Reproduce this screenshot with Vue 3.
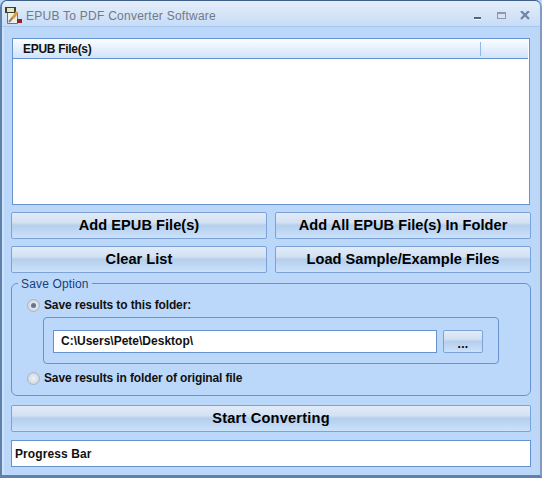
<template>
  <div class="window">
    <header class="titlebar">
      <svg class="appicon" width="18" height="17" viewBox="0 0 18 17">
        <path d="M2.5 5.5h10v11h-10z" fill="#f2efe8" stroke="#77726a" />
        <rect x="0" y="0" width="11" height="6" fill="#39422a" />
        <rect x="2" y="1" width="7" height="4" fill="#e6e6c4" />
        <path d="M4 15l5-6" stroke="#8a8478" stroke-width="2" />
        <path d="M8 11l4-6" stroke="#e09a30" stroke-width="3" />
        <rect x="12" y="12" width="5" height="4" fill="#9c2226" />
      </svg>
      <span class="title">EPUB To PDF Converter Software</span>
      <div class="controls">
        <svg width="57" height="14" viewBox="0 0 57 14">
          <rect x="0" y="6" width="7" height="2" fill="#5a6478" />
          <rect x="0" y="8" width="7" height="1" fill="#f4f8ff" />
          <rect x="23.5" y="1.5" width="8" height="6" fill="#d8e2f0" stroke="#8e98a8" />
          <rect x="23" y="1" width="9" height="2" fill="#8e98a8" />
          <path d="M47 0l8 8M55 0l-8 8" stroke="#7288a8" stroke-width="2.4" />
        </svg>
      </div>
    </header>
    <main class="client">
      <section class="list">
        <div class="listhead">
          <span class="listlabel">EPUB File(s)</span>
          <span class="divider"></span>
        </div>
      </section>
      <div class="btnrow">
        <button class="btn">Add EPUB File(s)</button>
        <button class="btn">Add All EPUB File(s) In Folder</button>
      </div>
      <div class="btnrow">
        <button class="btn">Clear List</button>
        <button class="btn">Load Sample/Example Files</button>
      </div>
      <fieldset class="group">
        <legend class="legend">Save Option</legend>
        <label class="radio first"><span class="dot on"></span>Save results to this folder:</label>
        <div class="inner">
          <div class="input">C:\Users\Pete\Desktop\</div>
          <button class="btn browse">...</button>
        </div>
        <label class="radio"><span class="dot"></span>Save results in folder of original file</label>
      </fieldset>
      <button class="btn wide">Start Converting</button>
      <div class="progress">Progress Bar</div>
    </main>
  </div>
</template>

<script setup>
</script>

<style>
html, body { margin: 0; background: #bbd8fb; }
</style>

<style scoped>
.window {
  width: 542px;
  height: 478px;
  box-sizing: border-box;
  background: #bbd8fb;
  border-left: 2px solid #5f82ad;
  border-right: 2px solid #7f9cc4;
  border-top: 1px solid #3f5f8a;
  border-bottom: 3px solid #5f82ad;
  border-radius: 7px 7px 0 0;
  font-family: "Liberation Sans", Arial, sans-serif;
  color: #000;
  overflow: hidden;
  display: flex;
  flex-direction: column;
}
.titlebar {
  height: 26px;
  flex: none;
  box-sizing: border-box;
  display: flex;
  align-items: center;
  padding: 4px 9px 0 3px;
  background: linear-gradient(#e4eefb, #d5e4f7 55%, #c6dcf8);
  border-bottom: 1px solid #a9c8ee;
}
.appicon { flex: none; }
.title {
  margin-left: 3px;
  font-size: 12px;
  letter-spacing: 0.25px;
  color: #6f7a8a;
}
.controls { margin-left: auto; display: flex; align-self: flex-start; margin-top: 6px; }
.client {
  flex: 1;
  padding: 11px 9px 0 9px;
  display: flex;
  flex-direction: column;
  box-shadow: inset -3px 0 0 #c2d5ee, inset 2px 0 0 #cfe2fb;
}
.list {
  height: 167px;
  margin: 0 1px;
  box-sizing: border-box;
  background: #fff;
  border: 1px solid #6693d0;
}
.listhead {
  height: 20px;
  box-sizing: border-box;
  display: flex;
  align-items: center;
  background: linear-gradient(#fbfdff, #d0e3fb);
  border-bottom: 1px solid #6693d0;
  margin-right: 1px;
  position: relative;
}
.listlabel {
  margin-left: 10px;
  font-size: 12px;
  font-weight: 700;
  letter-spacing: -0.3px;
  color: #111;
}
.divider {
  position: absolute;
  left: 467px;
  top: 3px;
  width: 1px;
  height: 14px;
  background: #8db8ee;
}
.btnrow {
  display: grid;
  grid-template-columns: 1fr 1fr;
  gap: 8px;
  margin-top: 7px;
}
.btn {
  height: 27px;
  padding: 0 0 2px;
  box-sizing: border-box;
  border: 1px solid #7da3d6;
  border-radius: 2px;
  background: linear-gradient(#e2ebf8 0%, #d3e1f3 38%, #b5cfec 50%, #bdd6f3 70%, #cce2fb 100%);
  font: 700 14.6px "Liberation Sans", Arial, sans-serif;
  letter-spacing: 0.03px;
  color: #000;
}
.group {
  margin: 2px 0 0;
  height: 121px;
  box-sizing: border-box;
  padding: 0 0 0 15px;
  min-width: 0;
  border: 1px solid #6693d0;
  border-radius: 6px;
}
.legend {
  margin-left: -9px;
  padding: 2px 3px 0 3px;
  font-size: 12px;
  line-height: 14px;
  letter-spacing: 0.15px;
  color: #1a3e78;
}
.radio {
  display: flex;
  align-items: center;
  height: 16px;
  font-size: 12px;
  font-weight: 700;
  letter-spacing: -0.13px;
  color: #111;
}
.first { margin-top: 6px; }
.dot {
  width: 11px;
  height: 11px;
  margin-right: 4px;
  border-radius: 50%;
  border: 1px solid #a8b4c4;
  background: radial-gradient(#eef2f8, #c6cfdb);
  position: relative;
}
.dot.on::after {
  content: "";
  position: absolute;
  left: 3px;
  top: 3px;
  width: 5px;
  height: 5px;
  border-radius: 50%;
  background: #6a7488;
}
.inner {
  margin: 4px 0 6px 16px;
  width: 456px;
  height: 47px;
  box-sizing: border-box;
  border: 1px solid #6693d0;
  border-radius: 4px;
  padding: 12px 0 0 9px;
  display: flex;
  gap: 6px;
}
.input {
  width: 384px;
  height: 23px;
  box-sizing: border-box;
  background: #fff;
  border: 1px solid #6693d0;
  padding-left: 7px;
  font-size: 12px;
  line-height: 21px;
  font-weight: 700;
  color: #111;
}
.browse {
  width: 40px;
  height: 23px;
  font-size: 12px;
  letter-spacing: 0.3px;
  padding: 5px 0 0;
}
.wide { margin-top: 9px; height: 27px; flex: none; letter-spacing: 0.2px; }
.progress {
  margin-top: 8px;
  height: 27px;
  box-sizing: border-box;
  background: #fff;
  border: 1px solid #6693d0;
  padding-left: 3px;
  font-size: 12px;
  line-height: 26px;
  font-weight: 700;
  letter-spacing: 0.1px;
  color: #111;
}
</style>
